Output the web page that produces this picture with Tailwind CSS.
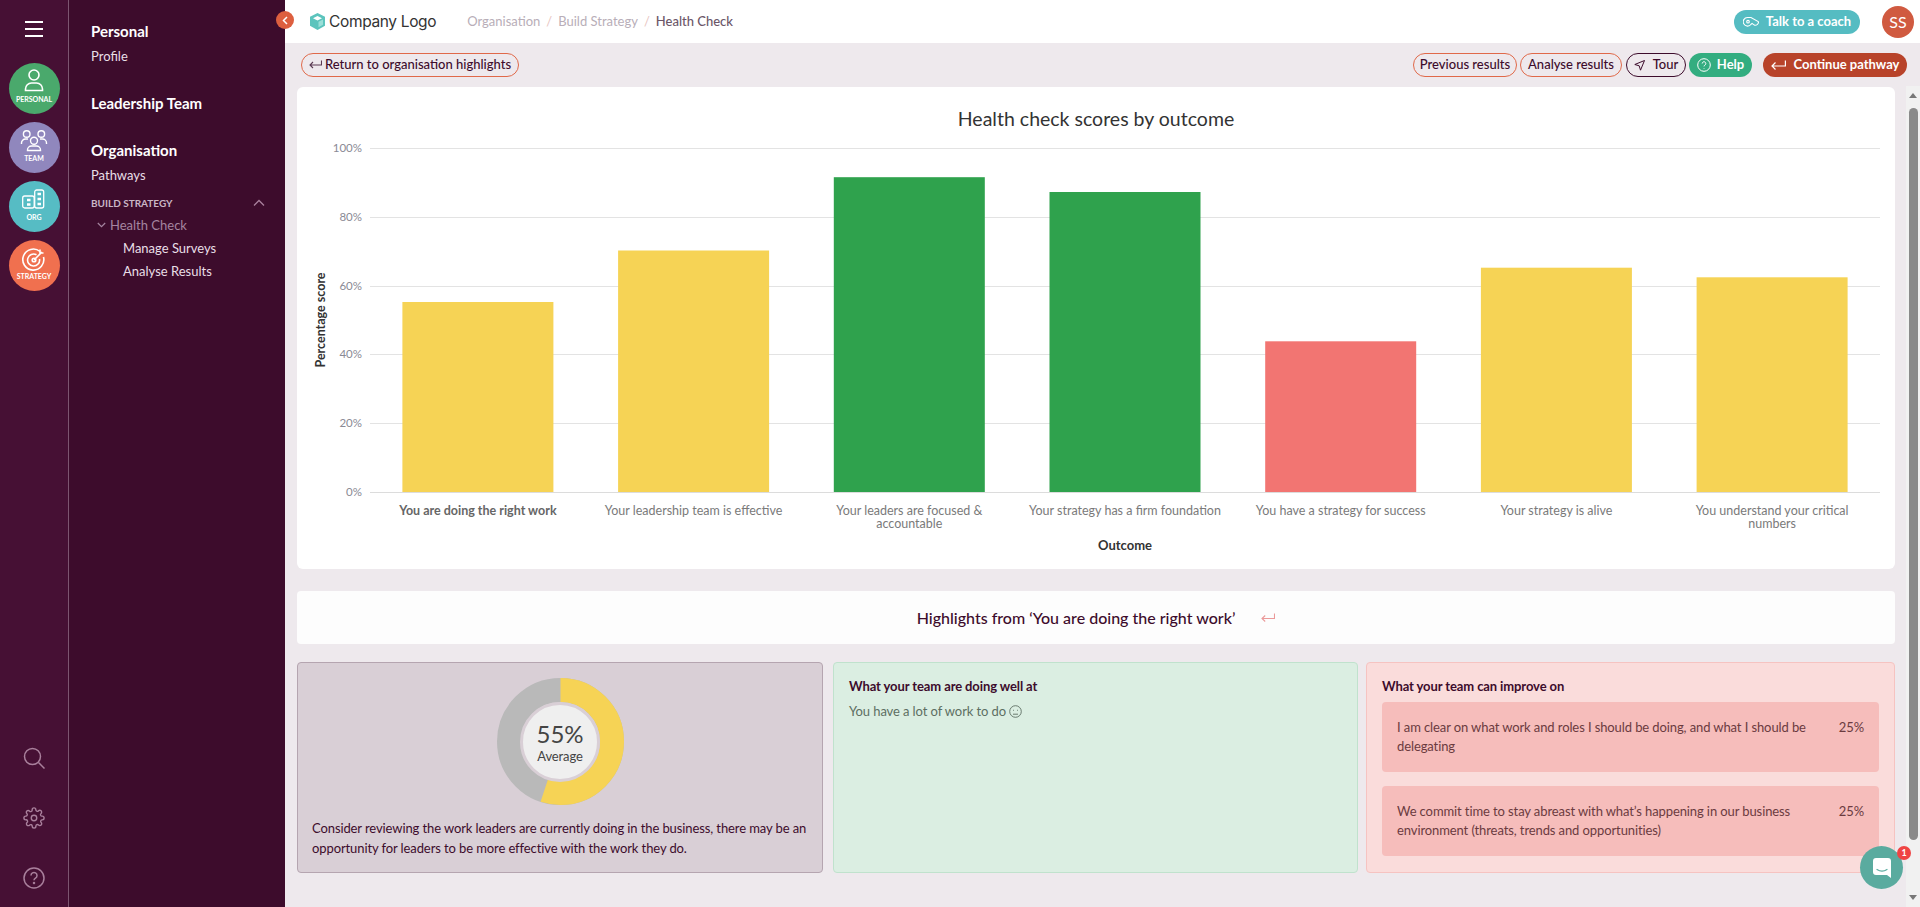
<!DOCTYPE html>
<html lang="en"><head><meta charset="utf-8"><title>Health Check</title>
<script src="https://cdn.jsdelivr.net/npm/@tailwindcss/browser@4"></script></head>
<body class="overflow-hidden">
<div class="relative flex h-[907px] w-[1920px] overflow-hidden bg-[#eee9ed] font-[Lato,sans-serif] text-[#3d0c2c]">

<!-- icon rail -->
<aside class="flex w-[69px] shrink-0 flex-col items-center border-r border-[#7c5570] bg-[#461034]">
  <button class="mt-[21px] flex h-[16px] w-[18px] flex-col justify-between">
    <span class="block h-[2px] w-full bg-white"></span><span class="block h-[2px] w-full bg-white"></span><span class="block h-[2px] w-full bg-white"></span>
  </button>
  <div class="mt-[26px] flex flex-col gap-[8px]">
    <div class="flex h-[51px] w-[51px] flex-col items-center rounded-full bg-[#4aa96c] pt-[6px] text-white">
      <svg class="h-[26px] w-[26px]" viewBox="0 0 26 26" fill="none" stroke="currentColor" stroke-width="1.6"><circle cx="13" cy="6" r="5"/><path d="M4.500 21.500V20a6 6 0 0 1 6-6h5a6 6 0 0 1 6 6v1.500z"/></svg>
      <span class="mt-[-1px] text-[7px] leading-[10px] font-bold">PERSONAL</span>
    </div>
    <div class="flex h-[51px] w-[51px] flex-col items-center rounded-full bg-[#9087bd] pt-[6px] text-white">
      <svg class="h-[26px] w-[28px]" viewBox="0 0 28 26" fill="none" stroke="currentColor" stroke-width="1.4"><circle cx="6.700" cy="6" r="3.300"/><circle cx="21.300" cy="6" r="3.300"/><circle cx="14" cy="12.700" r="3.500"/><path d="M1.500 16v-1a4 4 0 0 1 4-4h2.500M26.500 16v-1a4 4 0 0 0-4-4H20M7.500 22.500V22a4 4 0 0 1 4-4h5a4 4 0 0 1 4 4v.5z"/></svg>
      <span class="mt-[-1px] text-[7px] leading-[10px] font-bold">TEAM</span>
    </div>
    <div class="flex h-[51px] w-[51px] flex-col items-center rounded-full bg-[#56bcc4] pt-[8px] text-white">
      <svg class="h-[24px] w-[24px]" viewBox="0 0 24 24" fill="none" stroke="currentColor" stroke-width="1.300"><rect x=".7" y="7" width="11.500" height="12" rx="2"/><rect x="12.700" y="1" width="9" height="18" rx="2"/><path stroke-width="2.300" d="M5 11h3.500M5 15.500h3.500M15.500 5h3.500M15.500 10h3.500M15.500 15h3.500"/></svg>
      <span class="mt-[-1px] text-[7px] leading-[10px] font-bold">ORG</span>
    </div>
    <div class="flex h-[51px] w-[51px] flex-col items-center rounded-full bg-[#f0704f] pt-[6px] text-white">
      <svg class="h-[26px] w-[26px]" viewBox="0 0 26 26" fill="none" stroke="currentColor" stroke-width="1.600"><path d="M19 5.500A10.500 10.500 0 1 0 22.500 11"/><path d="M15.500 8.800A6 6 0 1 0 18.500 13"/><circle cx="13" cy="14" r="1.800"/><path d="M13 14l8-8M19 3.500v3.500h3.500"/></svg>
      <span class="mt-[-1px] text-[7px] leading-[10px] font-bold">STRATEGY</span>
    </div>
  </div>
  <div class="mt-auto mb-[18px] flex flex-col items-center gap-[38px] text-[#a9809c]">
    <svg class="h-[22px] w-[22px]" viewBox="0 0 22 22" fill="none" stroke="currentColor" stroke-width="1.500"><circle cx="9.500" cy="9.500" r="8"/><path d="M15.500 15.500l6 6"/></svg>
    <svg class="h-[22px] w-[22px]" viewBox="0 0 24 24" fill="none" stroke="currentColor" stroke-width="1.500"><circle cx="12" cy="12" r="3"/><path d="M19.400 15a1.650 1.650 0 0 0 .33 1.820l.06.06a2 2 0 1 1-2.830 2.830l-.06-.06a1.650 1.650 0 0 0-2.820 1.170V21a2 2 0 1 1-4 0v-.09A1.650 1.650 0 0 0 7.260 19.730l-.06.06a2 2 0 1 1-2.830-2.830l.06-.06A1.650 1.650 0 0 0 3.090 14H3a2 2 0 1 1 0-4h.09A1.650 1.650 0 0 0 4.270 7.260l-.06-.06a2 2 0 1 1 2.830-2.830l.06.06A1.650 1.650 0 0 0 10 3.090V3a2 2 0 1 1 4 0v.09a1.650 1.650 0 0 0 2.820 1.170l.06-.06a2 2 0 1 1 2.830 2.830l-.06.06A1.650 1.650 0 0 0 20.910 10H21a2 2 0 1 1 0 4h-.09a1.650 1.650 0 0 0-1.510 1z"/></svg>
    <svg class="h-[22px] w-[22px]" viewBox="0 0 22 22" fill="none" stroke="currentColor" stroke-width="1.500"><circle cx="11" cy="11" r="10"/><path d="M8 8.500a3 3 0 1 1 4.500 2.600c-1 .6-1.500 1.100-1.500 2.200"/><circle cx="11" cy="16" r=".5"/></svg>
  </div>
</aside>

<!-- nav -->
<nav class="w-[216px] shrink-0 bg-[#3d0c2c] pt-[22px] pl-[22px] pr-[22px] text-[13px] text-[#e9dfe7]">
  <div class="text-[15px] leading-[18px] font-bold text-white">Personal</div>
  <div class="mt-[8px] leading-[16px]">Profile</div>
  <div class="mt-[30px] text-[15px] leading-[18px] font-bold text-white">Leadership Team</div>
  <div class="mt-[29px] text-[15px] leading-[18px] font-bold text-white">Organisation</div>
  <div class="mt-[8px] leading-[16px]">Pathways</div>
  <div class="mt-[13px] flex items-center justify-between">
    <span class="text-[10px] leading-[14px] font-bold text-[#c9b6c6]">BUILD STRATEGY</span>
    <svg class="mr-[-2px] h-[8px] w-[12px] text-[#a9809c]" viewBox="0 0 12 8" fill="none" stroke="currentColor" stroke-width="1.300"><path d="M1 6.500l5-5 5 5"/></svg>
  </div>
  <div class="mt-[7px] ml-[6px] flex items-center gap-[4px] leading-[16px] text-[#a585a0]">
    <svg class="h-[6px] w-[9px]" viewBox="0 0 9 6" fill="none" stroke="currentColor" stroke-width="1.200"><path d="M.8 1l3.700 3.700L8.200 1"/></svg>
    <span>Health Check</span>
  </div>
  <div class="mt-[7px] ml-[32px] leading-[16px]">Manage Surveys</div>
  <div class="mt-[7px] ml-[32px] leading-[16px]">Analyse Results</div>
</nav>

<!-- collapse -->
<button class="absolute top-[11px] left-[276px] flex h-[18px] w-[18px] items-center justify-center rounded-full bg-[#dd5f3f]">
  <svg class="h-[9px] w-[6px]" viewBox="0 0 6 9" fill="none" stroke="white" stroke-width="1.500"><path d="M5 1L1.500 4.500 5 8"/></svg>
</button>

<!-- main -->
<div class="flex min-w-0 flex-1 flex-col">
  <header class="flex h-[43px] items-center bg-white pl-[24px] pr-[6px]">
    <svg class="h-[17px] w-[17px]" viewBox="0 0 17 17"><path fill="#5cc4bd" d="M8.500 0l7.500 3.800v9L8.500 17 1 12.800v-9z"/><path fill="#fff" d="M8.500 3L13 5.200 8.500 7.500 4 5.200z"/><path fill="#9adfd8" d="M9.500 8.800L14 6.500v5.200l-4.500 2.500z"/></svg>
    <span class="ml-[3px] font-[Inter,sans-serif] text-[15.500px] tracking-[-0.35px] text-[#333]">Company Logo</span>
    <div class="ml-[31px] flex items-center text-[13px] text-[#b8aeb8]">
      <span>Organisation</span><span class="mx-[6px] text-[#e8c5bf]">/</span><span>Build Strategy</span><span class="mx-[6px] text-[#e8c5bf]">/</span><span class="font-medium text-[#6b5668]">Health Check</span>
    </div>
    <button class="ml-auto flex h-[24px] w-[126px] items-center justify-center gap-[6px] rounded-full bg-[#55bcc2] text-[13px] font-bold text-white">
      <svg class="h-[12px] w-[17px]" viewBox="0 0 17 12" fill="none" stroke="currentColor" stroke-width="1.100"><path d="M6 1.500h-1.500a4.300 4.300 0 1 0 3.600 6.700l1-.8 2.200 1.700c2 .9 5-1.800 3.900-3.500L8 1.500z"/><circle cx="5" cy="5.700" r="1.300"/></svg>
      Talk to a coach
    </button>
    <div class="ml-[22px] flex h-[32px] w-[32px] items-center justify-center rounded-full bg-[#d05a40] text-[16px] text-white">SS</div>
  </header>

  <div class="flex h-[43px] items-start pt-[10px] pl-[16px] pr-[13px] text-[13px] font-medium">
    <button class="flex h-[24px] w-[218px] items-center justify-center gap-[3px] rounded-full border border-[#e0694a]">
      <svg class="h-[10px] w-[13px] text-[#5a3a52]" viewBox="0 0 13 10" fill="none" stroke="currentColor" stroke-width="1.100"><path d="M12.500 .5v4.500H1M4 2L1 5l3 3"/></svg>
      Return to organisation highlights
    </button>
    <button class="ml-auto h-[24px] w-[104px] rounded-full border border-[#e0694a]">Previous results</button>
    <button class="ml-[3px] h-[24px] w-[102px] rounded-full border border-[#e0694a]">Analyse results</button>
    <button class="ml-[4px] flex h-[24px] w-[60px] items-center justify-center gap-[8px] rounded-full border border-[#3d0c2c]">
      <svg class="h-[11px] w-[11px]" viewBox="0 0 11 11" fill="none" stroke="currentColor" stroke-width="1"><path d="M10.500.5L.8 4.500l4.400 1.300 1.300 4.400z"/></svg>Tour
    </button>
    <button class="ml-[3px] flex h-[24px] w-[63px] items-center justify-center gap-[6px] rounded-full bg-[#33ad80] font-bold text-white">
      <svg class="h-[14px] w-[14px]" viewBox="0 0 14 14" fill="none" stroke="currentColor" stroke-width="1"><circle cx="7" cy="7" r="6.300"/><path d="M5.200 5.500a1.800 1.800 0 1 1 2.700 1.600c-.6.400-.9.700-.9 1.300M7 10v.6"/></svg>Help
    </button>
    <button class="ml-[11px] flex h-[24px] w-[144px] items-center justify-center gap-[8px] rounded-full bg-[#b8432a] font-bold text-white">
      <svg class="h-[11px] w-[15px]" viewBox="0 0 15 11" fill="none" stroke="currentColor" stroke-width="1.200"><path d="M14.400.5v5.500H1M4.500 2.500L1 6l3.500 3.500"/></svg>Continue pathway
    </button>
  </div>

  <div class="flex min-h-0 flex-1">
    <main class="flex min-w-0 flex-1 flex-col pt-[1px] pl-[12px] pr-[11px]">
      <section class="h-[482px] rounded-[6px] bg-white">
        <svg class="block h-[482px] w-[1598px]" viewBox="0 0 1598 482">
          <text x="799" y="39" text-anchor="middle" font-size="19.500" fill="#333">Health check scores by outcome</text>
          <g stroke="#e3e3e3" stroke-width="1"><path d="M73 61.500H1583M73 130.500H1583M73 199.500H1583M73 267.500H1583M73 336.500H1583"/></g>
          <path d="M73 405.500H1583" stroke="#dcdcdc"/>
          <g font-size="11.500" fill="#8a8a95" text-anchor="end">
            <text x="65" y="65">100%</text><text x="65" y="134">80%</text><text x="65" y="203">60%</text><text x="65" y="271">40%</text><text x="65" y="340">20%</text><text x="65" y="409">0%</text>
          </g>
          <text transform="translate(28 233) rotate(-90)" text-anchor="middle" font-size="12.500" font-weight="700" fill="#333">Percentage score</text>
          <rect x="105.400" y="215" width="151" height="190" fill="#f6d355"/>
          <rect x="321.100" y="163.500" width="151" height="241.500" fill="#f6d355"/>
          <rect x="536.800" y="90.200" width="151" height="314.800" fill="#2fa24d"/>
          <rect x="752.500" y="105" width="151" height="300" fill="#2fa24d"/>
          <rect x="968.200" y="254.300" width="151" height="150.700" fill="#f27572"/>
          <rect x="1183.900" y="180.700" width="151" height="224.300" fill="#f6d355"/>
          <rect x="1399.600" y="190.300" width="151" height="214.700" fill="#f6d355"/>
          <g font-size="12.500" fill="#7a7a7a" text-anchor="middle">
            <text x="180.900" y="428" font-weight="700" fill="#666">You are doing the right work</text>
            <text x="396.600" y="428">Your leadership team is effective</text>
            <text x="612.300" y="428">Your leaders are focused &amp;</text>
            <text x="612.300" y="441">accountable</text>
            <text x="828" y="428">Your strategy has a firm foundation</text>
            <text x="1043.700" y="428">You have a strategy for success</text>
            <text x="1259.400" y="428">Your strategy is alive</text>
            <text x="1475.100" y="428">You understand your critical</text>
            <text x="1475.100" y="441">numbers</text>
          </g>
          <text x="828" y="463" text-anchor="middle" font-size="13" font-weight="700" fill="#333">Outcome</text>
        </svg>
      </section>

      <section class="mt-[22px] flex h-[53px] items-center justify-center gap-[26px] rounded-[4px] bg-[#fdfdfd] text-[16px] font-medium">
        <span>Highlights from ‘You are doing the right work’</span>
        <svg class="h-[10px] w-[14px] text-[#eb9a9a]" viewBox="0 0 14 10" fill="none" stroke="currentColor" stroke-width="1.100"><path d="M13.500 .5v5H1M4.200 2.500L1 5.500l3.200 3"/></svg>
      </section>

      <div class="mt-[18px] flex h-[211px] text-[13px] tracking-[-0.1px]">
        <article class="flex w-[526px] shrink-0 flex-col items-center rounded-[4px] border border-[#b5a5b0] bg-[#d9cfd6] px-[14px] pt-[15px]">
          <div class="relative h-[127px] w-[127px] shrink-0">
            <svg class="h-full w-full -rotate-90" viewBox="0 0 127 127"><circle cx="63.500" cy="63.500" r="51.500" fill="none" stroke="#b9b9b9" stroke-width="24"/><circle cx="63.500" cy="63.500" r="51.500" fill="none" stroke="#f6d355" stroke-width="24" stroke-dasharray="178 323.600"/></svg>
            <div class="absolute top-[23.500px] left-[23.500px] flex h-[80px] w-[80px] flex-col items-center justify-center rounded-full border-[3px] border-[#d9cfd6] bg-[#efefef] text-[#444]">
              <span class="text-[24px] leading-[28px] font-normal">55%</span>
              <span class="text-[13px] leading-[16px]">Average</span>
            </div>
          </div>
          <p class="mt-[13px] w-full leading-[20px]">Consider reviewing the work leaders are currently doing in the business, there may be an opportunity for leaders to be more effective with the work they do.</p>
        </article>
        <article class="ml-[10px] w-[525px] shrink-0 rounded-[4px] border border-[#c0e2cd] bg-[#dbeee2] px-[15px] pt-[14px] text-[#5d6e63]">
          <h3 class="text-[13px] leading-[18px] font-bold text-[#3d0c2c]">What your team are doing well at</h3>
          <p class="mt-[7px] flex items-center gap-[3px] leading-[18px]">You have a lot of work to do
            <svg class="h-[13px] w-[13px]" viewBox="0 0 13 13" fill="none" stroke="currentColor" stroke-width=".9"><circle cx="6.500" cy="6.500" r="5.800"/><path d="M4 9.200h5M4.500 4.800v.9M8.500 4.800v.9"/></svg>
          </p>
        </article>
        <article class="ml-[8px] w-[529px] shrink-0 rounded-[4px] border border-[#f6c3c1] bg-[#fadcdb] px-[15px] pt-[14px] text-[#6b3b3f]">
          <h3 class="text-[13px] leading-[18px] font-bold text-[#3d0c2c]">What your team can improve on</h3>
          <div class="mt-[7px] flex h-[70px] justify-between gap-[30px] rounded-[4px] bg-[#f6bdbb] px-[15px] pt-[16px] leading-[19px]">
            <p class="w-[420px]">I am clear on what work and roles I should be doing, and what I should be delegating</p><span>25%</span>
          </div>
          <div class="mt-[14px] flex h-[70px] justify-between gap-[30px] rounded-[4px] bg-[#f6bdbb] px-[15px] pt-[16px] leading-[19px]">
            <p class="w-[420px]">We commit time to stay abreast with what’s happening in our business environment (threats, trends and opportunities)</p><span>25%</span>
          </div>
        </article>
      </div>
    </main>

    <div class="flex w-[14px] shrink-0 flex-col items-center bg-[#f1f1f1] pt-[7px] pb-[7px]">
      <span class="h-0 w-0 border-x-[4px] border-b-[5px] border-x-transparent border-b-[#777]"></span>
      <span class="mt-[10px] h-[732px] w-[9px] rounded-full bg-[#8a8a8a]"></span>
      <span class="mt-auto h-0 w-0 border-x-[4px] border-t-[5px] border-x-transparent border-t-[#777]"></span>
    </div>
  </div>
</div>

<!-- chat launcher -->
<button class="absolute top-[846px] left-[1860px] flex h-[43px] w-[43px] items-center justify-center rounded-full bg-[#5aab9f]">
  <svg class="h-[20px] w-[18px]" viewBox="0 0 18 20"><path fill="#fff" d="M3 0h12a3 3 0 0 1 3 3v17l-4-3H3a3 3 0 0 1-3-3V3a3 3 0 0 1 3-3z"/><path fill="none" stroke="#5aab9f" stroke-width="1.200" stroke-linecap="round" d="M4 11.500c3 2 7 2 10 0"/></svg>
</button>
<span class="absolute top-[846px] left-[1897px] flex h-[14px] w-[14px] items-center justify-center rounded-full bg-[#ef4444] text-[9px] font-bold text-white">1</span>
</div>
</body></html>
